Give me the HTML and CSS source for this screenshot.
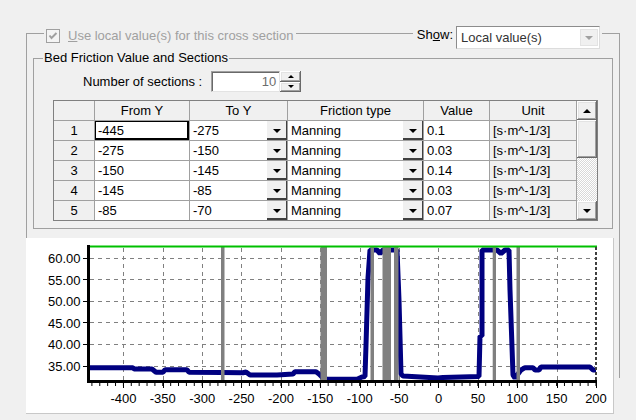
FILE: index.html
```html
<!DOCTYPE html>
<html lang="en">
<head>
    <meta charset="UTF-8">
    <title>Bed Friction</title>
    <link rel="stylesheet" href="styles.css">
</head>
<body>
    <div class="outer">
        <div class="outer-head">
            <label class="use-local">
                <svg class="check" width="14" height="14" viewBox="0 0 14 14">
                    <rect class="check-box" x="0.5" y="0.5" width="13" height="13"/>
                    <path class="check-mark" d="M3.5 6.5 L5.5 9 L10.5 4"/>
                </svg>
                <span><u>U</u>se local value(s) for this cross section</span>
            </label>
            <div class="show">
                <span class="show-label">Sh<u>o</u>w:</span>
                <div class="combo">
                    <span class="combo-text">Local value(s)</span>
                    <span class="combo-btn"><i class="tri-down tri-gray"></i></span>
                </div>
            </div>
        </div>

        <!-- Bed friction group -->
        <div class="inner">
            <div class="legend">Bed Friction Value and Sections</div>
            <div class="num-row">
                <span>Number of sections :</span>
                <div class="num-box">10</div>
                <div class="spin">
                    <span class="btn3d spin-btn"><i class="tri-up tri-small"></i></span>
                    <span class="btn3d spin-btn"><i class="tri-down tri-small"></i></span>
                </div>
            </div>

            <div class="sheet">
                <div class="cells">
                    <div class="hd"></div>
                    <div class="hd">From Y</div>
                    <div class="hd">To Y</div>
                    <div class="hd">Friction type</div>
                    <div class="hd">Value</div>
                    <div class="hd">Unit</div>

                    <div class="rh">1</div>
                    <div class="c focus">-445</div>
                    <div class="c dd"><span>-275</span><b class="dd-btn"><i class="tri-down"></i></b></div>
                    <div class="c dd"><span>Manning</span><b class="dd-btn"><i class="tri-down"></i></b></div>
                    <div class="c">0.1</div>
                    <div class="c unit">[s·m^-1/3]</div>

                    <div class="rh">2</div>
                    <div class="c">-275</div>
                    <div class="c dd"><span>-150</span><b class="dd-btn"><i class="tri-down"></i></b></div>
                    <div class="c dd"><span>Manning</span><b class="dd-btn"><i class="tri-down"></i></b></div>
                    <div class="c">0.03</div>
                    <div class="c unit">[s·m^-1/3]</div>

                    <div class="rh">3</div>
                    <div class="c">-150</div>
                    <div class="c dd"><span>-145</span><b class="dd-btn"><i class="tri-down"></i></b></div>
                    <div class="c dd"><span>Manning</span><b class="dd-btn"><i class="tri-down"></i></b></div>
                    <div class="c">0.14</div>
                    <div class="c unit">[s·m^-1/3]</div>

                    <div class="rh">4</div>
                    <div class="c">-145</div>
                    <div class="c dd"><span>-85</span><b class="dd-btn"><i class="tri-down"></i></b></div>
                    <div class="c dd"><span>Manning</span><b class="dd-btn"><i class="tri-down"></i></b></div>
                    <div class="c">0.03</div>
                    <div class="c unit">[s·m^-1/3]</div>

                    <div class="rh">5</div>
                    <div class="c">-85</div>
                    <div class="c dd"><span>-70</span><b class="dd-btn"><i class="tri-down"></i></b></div>
                    <div class="c dd"><span>Manning</span><b class="dd-btn"><i class="tri-down"></i></b></div>
                    <div class="c">0.07</div>
                    <div class="c unit">[s·m^-1/3]</div>
                </div>
                <div class="vscroll">
                    <span class="btn3d sb-btn"><i class="tri-up"></i></span>
                    <span class="btn3d sb-thumb"></span>
                    <span class="sb-track"></span>
                    <span class="btn3d sb-btn"><i class="tri-down"></i></span>
                </div>
            </div>
        </div>

        <!-- Cross section plot (viewBox uses page coordinates) -->
        <div class="chart">
            <svg width="587" height="175" viewBox="26 238 587 175">
                <path class="grid-line" d="M90 258.5H595 M90 279.5H595 M90 301.5H595 M90 322.5H595 M90 344.5H595 M90 366.5H595"/>
                <path class="grid-line" d="M123.5 248V380 M163.5 248V380 M202.5 248V380 M241.5 248V380 M281.5 248V380 M320.5 248V380 M360.5 248V380 M399.5 248V380 M438.5 248V380 M478.5 248V380 M517.5 248V380 M557.5 248V380"/>

                <polyline class="bed" points="88,367.7 133,367.7 134,369 152,369 156,372.3 163,372.3 165,369.7 187,369.7 189,372.3 222,372.5 243,372.7 246,372 250,375 277,375 293,374 295,371.7 316,371.7 319,374 322,377 327,379.3 357,379.3 362,377 365,376.5 366,345 368,278 370,250 377,250 380,253.5 383,250 397,250 399,300 401,374 403,376 438,378 443,377.5 479,376.5 480,336 482,336 482,250 497,250 501,253.5 505,250 509,250 510,290 513,375 515,378 521,370 525,367.7 533,367.7 535,370 539,370 541,367 590,367 593,370 596,370"/>

                <g class="section-bar">
                    <rect x="221" y="247" width="3.5" height="134"/>
                    <rect x="320.5" y="247" width="6.5" height="134"/>
                    <rect x="370.5" y="247" width="3.5" height="134"/>
                    <rect x="382.5" y="247" width="8.5" height="134"/>
                    <rect x="394" y="247" width="4.5" height="134"/>
                    <rect x="492.7" y="247" width="3.3" height="134"/>
                    <rect x="516.5" y="247" width="3.5" height="134"/>
                </g>

                <rect class="axis-top" x="88" y="245.5" width="509" height="2"/>
                <path class="axis-right" d="M596 247V381"/>
                <rect class="axis" x="87" y="245" width="3" height="138"/>
                <rect class="axis" x="87" y="380" width="510" height="3"/>

                <path class="tick" d="M83 258.5H87 M83 279.5H87 M83 301.5H87 M83 322.5H87 M83 344.5H87 M83 366.5H87"/>
                <path class="tick-minor" d="M91.4 384.5H597"/>
                <path class="tick" d="M123.5 383V388 M163.5 383V388 M202.5 383V388 M241.5 383V388 M281.5 383V388 M320.5 383V388 M360.5 383V388 M399.5 383V388 M438.5 383V388 M478.5 383V388 M517.5 383V388 M557.5 383V388 M596.5 383V388"/>

                <g class="y-label">
                    <text x="80.5" y="263">60.00</text>
                    <text x="80.5" y="284.5">55.00</text>
                    <text x="80.5" y="306">50.00</text>
                    <text x="80.5" y="327.5">45.00</text>
                    <text x="80.5" y="349">40.00</text>
                    <text x="80.5" y="371">35.00</text>
                </g>
                <g class="x-label">
                    <text x="123.4" y="402.5">-400</text>
                    <text x="162.8" y="402.5">-350</text>
                    <text x="202.2" y="402.5">-300</text>
                    <text x="241.6" y="402.5">-250</text>
                    <text x="281" y="402.5">-200</text>
                    <text x="320.3" y="402.5">-150</text>
                    <text x="359.7" y="402.5">-100</text>
                    <text x="399.1" y="402.5">-50</text>
                    <text x="438.5" y="402.5">0</text>
                    <text x="477.9" y="402.5">50</text>
                    <text x="517.2" y="402.5">100</text>
                    <text x="556.6" y="402.5">150</text>
                    <text x="596" y="402.5">200</text>
                </g>
            </svg>
        </div>
    </div>
</body>
</html>
```

FILE: styles.css
```css
/* Global */
* {
    box-sizing: border-box;
}

body {
    margin: 0;
    min-height: 100vh;
    background-color: #f0f0f0;
    font-family: "Liberation Sans", Arial, sans-serif;
    font-size: 13px;
    color: #000;
}

/* Outer group box */
.outer {
    margin: 33px 0 0 26px;
    width: 594px;
    height: 345px;
    border: 1px solid #a0a0a0;
    border-bottom: none;
}

.outer-head {
    display: flex;
    justify-content: space-between;
    align-items: flex-start;
    height: 23px;
    margin-top: -8px;
    padding: 0 17px;
}

.use-local {
    display: flex;
    align-items: flex-start;
    margin-top: 2px;
    padding: 0 3px 0 2px;
    background-color: #f0f0f0;
    color: #a0a0a0;
    line-height: 16px;
}

.check {
    margin: 1px 8px 0 0;
}

.check-box {
    fill: #f4f4f4;
    stroke: #a0a0a0;
}

.check-mark {
    fill: none;
    stroke: #a0a0a0;
    stroke-width: 2;
}

.show {
    display: flex;
    align-items: flex-start;
    background-color: #f0f0f0;
    padding: 0 2px 0 4px;
}

.show-label {
    line-height: 17px;
    margin: 0 3px 0 0;
}

.combo {
    display: flex;
    align-items: center;
    width: 144px;
    height: 23px;
    background-color: #fff;
    border: 1px solid;
    border-color: #8c8c8c #dcdcdc #dcdcdc #8c8c8c;
    padding: 1px;
}

.combo-text {
    flex: 1;
    padding-left: 3px;
    color: #333;
}

.combo-btn {
    display: flex;
    align-items: center;
    justify-content: center;
    width: 18px;
    height: 17px;
    background-color: #f0f0f0;
    border: 1px solid #e3e3e3;
}

/* Triangles */
.tri-down, .tri-up {
    display: block;
    width: 0;
    height: 0;
    border-left: 4px solid transparent;
    border-right: 4px solid transparent;
}

.tri-down {
    border-top: 4px solid #000;
}

.tri-up {
    border-bottom: 4px solid #000;
}

.tri-gray {
    border-top-color: #a0a0a0;
}

.tri-small {
    border-left-width: 3px;
    border-right-width: 3px;
    border-top-width: 3px;
    border-bottom-width: 3px;
}

.tri-small.tri-down {
    border-bottom: none;
}

.tri-small.tri-up {
    border-top: none;
}

.btn3d {
    display: flex;
    align-items: center;
    justify-content: center;
    background-color: #f0f0f0;
    box-shadow: inset -1px -1px #696969, inset 1px 1px #fff, inset -2px -2px #a0a0a0, inset 2px 2px #e3e3e3;
}

/* Inner group box */
.inner {
    margin: 9px 0 0 6px;
    width: 580px;
    height: 171px;
    border: 1px solid #a0a0a0;
    padding-left: 19px;
}

.legend {
    width: fit-content;
    margin: -9px 0 0 -10px;
    padding: 0 1px;
    background-color: #f0f0f0;
    line-height: 16px;
}

.num-row {
    display: flex;
    align-items: center;
    height: 21px;
    margin: 5px 0 0 30px;
}

.num-box {
    width: 69px;
    height: 21px;
    margin-left: 9px;
    background-color: #fff;
    border: 1px solid;
    border-color: #a0a0a0 #e3e3e3 #e3e3e3 #a0a0a0;
    box-shadow: inset 1px 1px #696969;
    text-align: right;
    padding-right: 3px;
    line-height: 19px;
    color: #6d6d6d;
}

.spin {
    display: flex;
    flex-direction: column;
    width: 21px;
    height: 21px;
}

.spin-btn {
    flex: 1;
}

/* Section table */
.sheet {
    display: flex;
    width: fit-content;
    margin-top: 8px;
    border: 1px solid #808080;
}

.cells {
    display: grid;
    grid-template-columns: 40px 94px 97px 135px 65px 86px;
    grid-template-rows: repeat(6, 19px);
    gap: 1px;
    background-color: #a0a0a0;
    border-right: 1px solid #a0a0a0;
}

.hd {
    background-color: #f0f0f0;
    text-align: center;
    line-height: 19px;
}

.rh {
    background-color: #f0f0f0;
    text-align: center;
    line-height: 19px;
}

.c {
    background-color: #fff;
    padding-left: 3px;
    line-height: 19px;
    white-space: nowrap;
    overflow: hidden;
}

.c.unit {
    background-color: #f0f0f0;
}

.c.focus {
    box-shadow: inset 1px 1px #000, inset -2px -2px #000;
}

.dd {
    display: flex;
    align-items: flex-start;
}

.dd span {
    flex: 1;
}

.dd-btn {
    display: flex;
    align-items: center;
    justify-content: center;
    width: 20px;
    height: 19px;
    background-color: #f0f0f0;
    box-shadow: inset -1px -2px #404040;
}

.vscroll {
    display: flex;
    flex-direction: column;
    width: 20px;
}

.sb-btn {
    height: 19px;
}

.sb-thumb {
    height: 38px;
}

.sb-track {
    flex: 1;
    background: repeating-conic-gradient(#fff 0 25%, #d8d8d8 0 50%) 0 0 / 2px 2px;
}

/* Chart */
.chart {
    margin: 9px 0 0 -1px;
    width: 588px;
    height: 176px;
    background-color: #fff;
    border-right: 1px solid #c8c8c8;
    border-bottom: 1px solid #c8c8c8;
}

.chart svg {
    display: block;
}

.grid-line {
    fill: none;
    stroke: #808080;
    stroke-width: 1;
    stroke-dasharray: 4 4;
}

.bed {
    fill: none;
    stroke: #000080;
    stroke-width: 5;
    stroke-linejoin: bevel;
}

.section-bar {
    fill: #808080;
}

.axis {
    fill: #000;
}

.axis-top {
    fill: #00c000;
}

.axis-right {
    fill: none;
    stroke: #404040;
    stroke-width: 2;
    stroke-dasharray: 3 2;
}

.tick {
    fill: none;
    stroke: #000;
    stroke-width: 1;
}

.tick-minor {
    fill: none;
    stroke: #000;
    stroke-width: 3;
    stroke-dasharray: 1 6.876;
}

.y-label text {
    font-size: 13px;
    text-anchor: end;
    fill: #000;
}

.x-label text {
    font-size: 13px;
    text-anchor: middle;
    fill: #000;
}
```
